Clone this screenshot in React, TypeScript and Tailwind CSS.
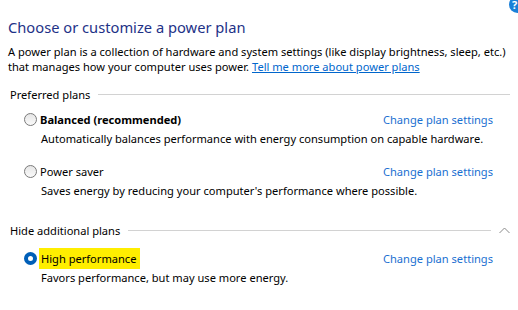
import React from "react";

const PLANS_PREFERRED = [
  {
    name: "Balanced (recommended)",
    desc: "Automatically balances performance with energy consumption on capable hardware.",
    bold: true,
  },
  {
    name: "Power saver",
    desc: "Saves energy by reducing your computer's performance where possible.",
    bold: false,
  },
];

function Radio({ checked }: { checked?: boolean }) {
  if (checked) {
    return (
      <span className="w-[13px] h-[13px] rounded-full border-[4px] border-[#005fb8] bg-white shrink-0" />
    );
  }
  return (
    <span className="w-[13px] h-[13px] rounded-full border border-[#7a7a7a] bg-gradient-to-b from-[#e6e6e6] to-[#fafafa] shrink-0" />
  );
}

function SectionHeader({ title, collapsible }: { title: string; collapsible?: boolean }) {
  return (
    <div className="flex items-center leading-[15px] pl-[2px]">
      <span>{title}</span>
      <div className="flex-1 h-px bg-[#d2d2d2] ml-[8px]" />
      {collapsible && (
        <svg width="11" height="7" viewBox="0 0 11 7" className="ml-[8px] mr-0">
          <path d="M0.5 6 L5.5 1 L10.5 6" fill="none" stroke="#8a8a8a" strokeWidth="1" />
        </svg>
      )}
    </div>
  );
}

function PlanRow({
  name,
  desc,
  bold,
  checked,
  highlight,
}: {
  name: string;
  desc: string;
  bold?: boolean;
  checked?: boolean;
  highlight?: boolean;
}) {
  return (
    <div className="pl-[16px] pr-[17px]">
      <div className="flex items-center leading-[15px]">
        <Radio checked={checked} />
        <span
          className={`ml-[2px] ${bold ? "font-bold" : ""} ${
            highlight ? "bg-[#ffee00] pl-[2px] pr-[4px] py-[3px] -my-[3px]" : "ml-[3px]"
          }`}
        >
          {name}
        </span>
        <div className="flex-1" />
        <a className="text-[#1a6fd1] cursor-pointer">Change plan settings</a>
      </div>
      <p className="mt-[4px] ml-[17px] leading-[15px]">{desc}</p>
    </div>
  );
}

export default function App() {
  return (
    <div className="relative w-[518px] h-[310px] overflow-hidden bg-white text-black text-[11.1px] whitespace-nowrap font-['Noto_Sans',sans-serif]">
      {/* help button, clipped by the window edge */}
      <div className="absolute right-[-8px] top-[-4px] w-[17px] h-[17px] rounded-full bg-[#1b80d8] text-white text-[11px] font-bold leading-[17px] pl-[3px]">
        ?
      </div>

      <div className="px-2 pt-[14px]">
        <h1 className="text-[14.7px] leading-[26px] text-[#1e3287]">Choose or customize a power plan</h1>
        <p className="mt-[4px] leading-[15px]">
          A power plan is a collection of hardware and system settings (like display brightness, sleep, etc.)
          <br />
          that manages how your computer uses power.{" "}
          <a className="text-[#0066cc] underline cursor-pointer">Tell me more about power plans</a>
        </p>

        <div className="mt-[13px]">
          <SectionHeader title="Preferred plans" />
        </div>

        <div className="mt-[10px]">
          <PlanRow {...PLANS_PREFERRED[0]} />
        </div>
        <div className="mt-[18px]">
          <PlanRow {...PLANS_PREFERRED[1]} />
        </div>

        <div className="mt-[25px]">
          <SectionHeader title="Hide additional plans" collapsible />
        </div>

        <div className="mt-[13px]">
          <PlanRow
            name="High performance"
            desc="Favors performance, but may use more energy."
            checked
            highlight
          />
        </div>
      </div>
    </div>
  );
}
